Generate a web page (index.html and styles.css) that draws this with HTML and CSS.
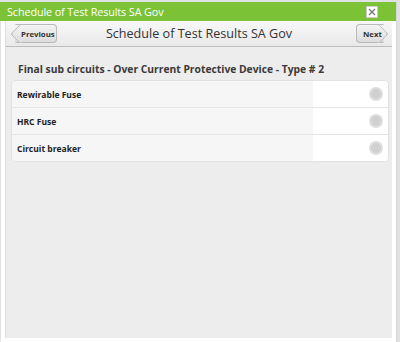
FILE: index.html
```html
<!DOCTYPE html>
<html lang="en">
<head>
    <meta charset="UTF-8">
    <meta name="viewport" content="width=device-width, initial-scale=1.0">
    <title>Schedule of Test Results SA Gov</title>
    <link rel="stylesheet" href="styles.css">
</head>
<body>

    <div class="dialog">
        <div class="dialog-titlebar">
            <span class="dialog-title">Schedule of Test Results SA Gov</span>
            <button class="close-btn" aria-label="Close">
                <svg width="8" height="8" viewBox="0 0 8 8"><path d="M1 1L7 7M7 1L1 7" stroke="#777" stroke-width="1.3"/></svg>
            </button>
        </div>

        <div class="dialog-body">
            <div class="toolbar">
                <button class="nav-btn prev-btn">Previous</button>
                <h1 class="toolbar-title">Schedule of Test Results SA Gov</h1>
                <button class="nav-btn next-btn">Next</button>
            </div>

            <div class="content">
                <h2 class="section-title">Final sub circuits - Over Current Protective Device - Type # 2</h2>
                <ul class="option-list">
                    <li class="option-row">
                        <span class="option-label">Rewirable Fuse</span>
                        <span class="option-radio"><span class="radio-dot"></span></span>
                    </li>
                    <li class="option-row">
                        <span class="option-label">HRC Fuse</span>
                        <span class="option-radio"><span class="radio-dot"></span></span>
                    </li>
                    <li class="option-row">
                        <span class="option-label">Circuit breaker</span>
                        <span class="option-radio"><span class="radio-dot"></span></span>
                    </li>
                </ul>
            </div>
        </div>
    </div>

</body>
</html>
```

FILE: styles.css
```css
html, body {
    height: 100%;
}
body {
    font-family: "Open Sans", "Liberation Sans", Arial, sans-serif;
    background-color: #dfe3e6;
    margin: 0;
    padding: 2px 3px 0 0;
    box-sizing: border-box;
    overflow: hidden;
}
.dialog {
    height: 340px;
    display: flex;
    flex-direction: column;
    background-color: #fff;
    border-right: 1px solid #d6d6d6;
    border-left: 1px solid #e2e2e2;
    box-sizing: border-box;
}
.dialog-titlebar {
    height: 19px;
    flex-shrink: 0;
    display: flex;
    align-items: center;
    justify-content: space-between;
    padding: 0 18px 0 7px;
    background-color: #7bc236;
    margin-left: -1px;
}
.dialog-title {
    color: #fff;
    font-size: 10.8px;
    letter-spacing: -0.1px;
}
.close-btn {
    width: 12px;
    height: 12px;
    padding: 0;
    border: 1px solid #ccc;
    background-color: #fff;
    display: flex;
    align-items: center;
    justify-content: center;
    cursor: pointer;
}
.dialog-body {
    flex: 1;
    display: flex;
    flex-direction: column;
    margin: 0 4px 4px 4px;
    background-color: #ededed;
    border-left: 1px solid #e0e0e0;
}
.toolbar {
    height: 25px;
    flex-shrink: 0;
    display: grid;
    grid-template-columns: 1fr auto 1fr;
    align-items: center;
    background: linear-gradient(#f8f8f8, #e9e9e9);
    border-bottom: 1px solid #bdbdbd;
}
.toolbar-title {
    margin: 0;
    font-size: 12.6px;
    font-weight: 400;
    color: #333;
}
.nav-btn {
    position: relative;
    z-index: 0;
    box-sizing: border-box;
    height: 19px;
    padding: 0;
    font-family: inherit;
    font-size: 7.8px;
    font-weight: 700;
    color: #333;
    text-align: left;
    background: linear-gradient(#f4f4f4, #dcdcdc);
    border: 1px solid #b9b9b9;
    cursor: pointer;
}
/* arrow tip drawn as a rotated square behind the label */
.nav-btn::before {
    content: "";
    position: absolute;
    top: 2px;
    width: 13px;
    height: 13px;
    transform: rotate(45deg);
    background: linear-gradient(135deg, #f4f4f4, #dcdcdc);
    z-index: -1;
}
.prev-btn {
    justify-self: start;
    width: 42px;
    margin-left: 9px;
    padding-left: 5px;
    border-left-color: transparent;
    border-radius: 0 4px 4px 0;
}
.prev-btn::before {
    left: -3px;
    border-left: 1px solid #b9b9b9;
    border-bottom: 1px solid #b9b9b9;
    border-bottom-left-radius: 3px;
}
.next-btn {
    justify-self: end;
    width: 28px;
    margin-right: 8px;
    padding-left: 6px;
    border-right-color: transparent;
    border-radius: 4px 0 0 4px;
}
.next-btn::before {
    right: -3px;
    border-right: 1px solid #b9b9b9;
    border-top: 1px solid #b9b9b9;
    border-top-right-radius: 3px;
}
.content {
    padding: 15px 3px 0 5px;
}
.section-title {
    margin: 0 0 4px 7px;
    font-size: 10.3px;
    font-weight: 700;
    color: #3a3a3a;
}
.option-list {
    list-style: none;
    margin: 0;
    padding: 0;
    background-color: #fff;
    border: 1px solid #e2e2e2;
    border-radius: 5px;
    overflow: hidden;
}
.option-row {
    display: flex;
    height: 26px;
    border-bottom: 1px solid #e6e6e6;
}
.option-row:last-child {
    border-bottom: none;
}
.option-label {
    flex: 1;
    display: flex;
    align-items: center;
    padding-left: 5px;
    background-color: #f6f6f6;
    font-size: 8.5px;
    font-weight: 700;
    color: #222;
}
.option-radio {
    width: 70px;
    display: flex;
    align-items: center;
    justify-content: flex-end;
    padding-right: 5px;
    background-color: #fff;
}
.radio-dot {
    width: 10px;
    height: 10px;
    border-radius: 50%;
    background-color: #d0d0d0;
    border: 2px solid #dedede;
}
```
